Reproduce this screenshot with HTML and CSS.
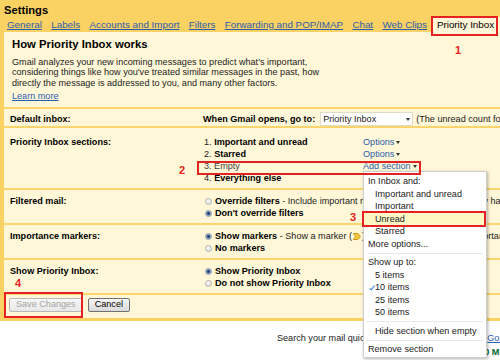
FILE: index.html
```html
<!DOCTYPE html>
<html lang="en">
<head>
    <meta charset="UTF-8">
    <meta name="viewport" content="width=device-width, initial-scale=1.0">
    <title>Settings - Priority Inbox</title>
    <link rel="stylesheet" href="styles.css">
</head>
<body>
<div class="page">
    <div class="header">
        <div class="title">Settings</div>
        <div class="tabs">
            <a href="#">General</a>
            <a href="#">Labels</a>
            <a href="#">Accounts and Import</a>
            <a href="#">Filters</a>
            <a href="#">Forwarding and POP/IMAP</a>
            <a href="#">Chat</a>
            <a href="#">Web Clips</a>
            <span class="active">Priority Inbox</span>
        </div>
    </div>

    <div class="content">
        <div class="intro">
            <h2>How Priority Inbox works</h2>
            <p>Gmail analyzes your new incoming messages to predict what's important, considering things like how you've treated similar messages in the past, how directly the message is addressed to you, and many other factors.</p>
            <a href="#">Learn more</a>
        </div>

        <div class="row row-inbox">
            <div class="label">Default inbox:</div>
            <div class="value">
                <b>When Gmail opens, go to:</b>
                <span class="select">Priority Inbox<i class="caret"></i></span>
                (The unread count for Priority Inbox will be shown in the title.)
            </div>
        </div>

        <div class="row row-sections">
            <div class="label">Priority Inbox sections:</div>
            <div class="value">
                <div class="sec"><span>1. <b>Important and unread</b></span><a href="#">Options<i class="caret"></i></a></div>
                <div class="sec"><span>2. <b>Starred</b></span><a href="#">Options<i class="caret"></i></a></div>
                <div class="sec empty"><span>3. Empty</span><a href="#">Add section<i class="caret"></i></a></div>
                <div class="sec"><span>4. <b>Everything else</b></span></div>
            </div>
        </div>

        <div class="row">
            <div class="label">Filtered mail:</div>
            <div class="value">
                <div class="choice"><span class="radio"></span><b>Override filters</b> - Include important messages in the inbox that may have been filtered out of the inbox by filters you have set.</div>
                <div class="choice"><span class="radio on"></span><b>Don't override filters</b></div>
            </div>
        </div>

        <div class="row">
            <div class="label">Importance markers:</div>
            <div class="value">
                <div class="choice"><span class="radio on"></span><b>Show markers</b> - Show a marker (<svg class="marker" width="8" height="7" viewBox="0 0 8 7"><path d="M0.5 0.5h4.5l2.5 3-2.5 3h-4.5l2-3z" fill="#f5c842" stroke="#c99a1e"/></svg>) by messages marked as important.</div>
                <div class="choice"><span class="radio"></span><b>No markers</b></div>
            </div>
        </div>

        <div class="row">
            <div class="label">Show Priority Inbox:</div>
            <div class="value">
                <div class="choice"><span class="radio on"></span><b>Show Priority Inbox</b></div>
                <div class="choice"><span class="radio"></span><b>Do not show Priority Inbox</b></div>
            </div>
        </div>

        <div class="buttons">
            <button class="btn" disabled>Save Changes</button>
            <button class="btn">Cancel</button>
        </div>
    </div>

    <div class="footer">
        <div class="tip">Search your mail quickly from your desktop with the <a href="#">Google Desktop</a></div>
        <div class="usage">You are currently using <span>0 MB (0%)</span> of your 7516 MB.</div>
    </div>

    <div class="menu">
        <div class="item">In Inbox and:</div>
        <div class="item sub">Important and unread</div>
        <div class="item sub">Important</div>
        <div class="item sub hl">Unread</div>
        <div class="item sub">Starred</div>
        <div class="item">More options...</div>
        <div class="sep"></div>
        <div class="item">Show up to:</div>
        <div class="item sub">5 items</div>
        <div class="item sub"><svg class="check" width="6" height="6" viewBox="0 0 6 6"><path d="M0.6 3.2l1.6 1.7 3.3-4.2" fill="none" stroke="#4d8fd6" stroke-width="1.1"/></svg>10 items</div>
        <div class="item sub">25 items</div>
        <div class="item sub">50 items</div>
        <div class="sep"></div>
        <div class="item sub">Hide section when empty</div>
        <div class="sep"></div>
        <div class="item">Remove section</div>
    </div>

    <div class="mark mark1"></div>
    <div class="mark mark2"></div>
    <div class="mark mark3"></div>
    <div class="mark mark4"></div>
    <div class="note note1">1</div>
    <div class="note note2">2</div>
    <div class="note note3">3</div>
    <div class="note note4">4</div>
</div>
</body>
</html>
```

FILE: styles.css
```css
html, body {
    margin: 0;
    overflow: hidden;
}

body {
    width: 500px;
    height: 360px;
    background-color: #ffffff;
    font-family: "Liberation Sans", Arial, sans-serif;
    font-size: 9.1px;
    color: #222;
}

a {
    color: #2a5db0;
}

.page {
    position: relative;
    height: 360px;
    overflow: hidden;
}

.header {
    background-color: #fad163;
    padding: 3px 0 0 4px;
}

.title {
    font-size: 11.2px;
    font-weight: bold;
    line-height: 14px;
    color: #000;
}

.tabs {
    display: flex;
    height: 15px;
    padding-left: 3px;
    font-size: 9.8px;
    line-height: 15px;
    white-space: nowrap;
}

.tabs a,
.tabs .active {
    flex-shrink: 0;
}

.tabs a {
    margin-right: 9.4px;
}

.tabs a:last-of-type {
    margin-right: 4px;
}

.tabs .active {
    background-color: #fff7d7;
    color: #000;
    padding: 0 6px;
}

.content {
    background-color: #fff7d7;
    border-left: 4px solid #fad163;
    border-bottom: 3px solid #fad163;
}

.intro {
    padding: 5px 8px 6px;
}

.intro h2 {
    margin: 0;
    font-size: 11.3px;
    line-height: 15px;
    color: #000;
}

.intro p {
    margin: 4.5px 0 0;
    width: 335px;
    line-height: 10.5px;
}

.intro a {
    display: block;
    margin-top: 2.5px;
    line-height: 10.5px;
}

.row {
    display: grid;
    grid-template-columns: 193px 1fr;
    border-top: 2px solid #fcd56c;
    padding: 5px 0 4px 6px;
    line-height: 12px;
    white-space: nowrap;
}

.label {
    font-weight: bold;
    color: #000;
}

.value b {
    color: #000;
}

.row-inbox {
    align-items: center;
    padding: 3px 0 0 6px;
}

.row-inbox .value {
    display: flex;
    align-items: center;
}

.select {
    display: inline-flex;
    align-items: center;
    justify-content: space-between;
    flex-shrink: 0;
    box-sizing: border-box;
    width: 93px;
    height: 14px;
    margin: 0 3px 0 5px;
    padding: 0 2px;
    background-color: #fff;
    border: 1px solid #e2dcc4;
    color: #222;
}

.caret {
    display: inline-block;
    width: 0;
    height: 0;
    margin-left: 2px;
    border-left: 2.5px solid transparent;
    border-right: 2.5px solid transparent;
    border-top: 3px solid #333;
    vertical-align: middle;
}

.row-sections {
    padding: 8px 0 4px 6px;
}

.sec {
    display: grid;
    grid-template-columns: 159px auto;
    padding-left: 1px;
}

.sec a {
    text-decoration: none;
}

.sec.empty span {
    color: #444;
}

.choice {
    height: 12px;
}

.radio {
    display: inline-block;
    box-sizing: border-box;
    width: 7px;
    height: 7px;
    margin: 0 3px 0 2px;
    border: 1px solid #b4b4b4;
    border-radius: 50%;
    background: radial-gradient(circle at 40% 40%, #fafafa, #d6d6d6);
    vertical-align: -0.5px;
}

.radio.on {
    border-color: #8e99a8;
    background: radial-gradient(circle, #1d3a66 0, #2d5588 1.3px, #b9c6d8 2.4px, #e2e2e2 3px);
}

.marker {
    margin: 0 1px;
    vertical-align: -0.5px;
}

.buttons {
    display: flex;
    gap: 5px;
    border-top: 2px solid #fcd56c;
    padding: 3px 0 6.5px 5px;
}

.btn {
    box-sizing: border-box;
    height: 13.5px;
    padding: 0 6px;
    font-family: inherit;
    font-size: 9.1px;
    line-height: 11px;
    color: #000;
    border: 1px solid #6f6f6f;
    border-radius: 2px;
    background: linear-gradient(#f6f6f6, #dadada);
}

.btn:disabled {
    color: #a3a3a3;
    border-color: #b8b8b8;
    background: linear-gradient(#f8f8f8, #e8e8e8);
}

.footer {
    padding-top: 10px;
    line-height: 14px;
    white-space: nowrap;
}

.tip {
    padding-left: 277px;
}

.usage {
    padding-left: 389px;
}

.usage span {
    color: #063;
    font-weight: bold;
}

/* open "Add section" dropdown */
.menu {
    position: absolute;
    left: 363px;
    top: 171px;
    width: 122px;
    padding: 3px 0 1px;
    background-color: #fff;
    border: 1px solid #cfcfcf;
    box-shadow: 1px 1px 3px rgba(0, 0, 0, 0.3);
    line-height: 12.5px;
    color: #222;
    white-space: nowrap;
}

.menu .item {
    padding-left: 4px;
}

.menu .sub {
    padding-left: 11px;
}

.menu .hl {
    background-color: #fff8c4;
}

.menu .sep {
    margin: 2.5px 3px;
    border-top: 1px solid #e8e8e8;
}

.check {
    margin-left: -6px;
    vertical-align: middle;
}

/* annotations */
.mark {
    position: absolute;
    box-sizing: border-box;
    border: 2px solid #e42222;
}

.mark1 {
    left: 431px;
    top: 16px;
    width: 67px;
    height: 20px;
}

.mark2 {
    left: 197px;
    top: 161px;
    width: 224px;
    height: 14px;
}

.mark3 {
    left: 362px;
    top: 211px;
    width: 124px;
    height: 16px;
}

.mark4 {
    left: 4px;
    top: 292px;
    width: 79px;
    height: 26px;
}

.note {
    position: absolute;
    color: #e42222;
    font-size: 11px;
    font-weight: bold;
    line-height: 12px;
}

.note1 {
    left: 455px;
    top: 44px;
}

.note2 {
    left: 179px;
    top: 164px;
}

.note3 {
    left: 350px;
    top: 211px;
}

.note4 {
    left: 15px;
    top: 277px;
}
```
